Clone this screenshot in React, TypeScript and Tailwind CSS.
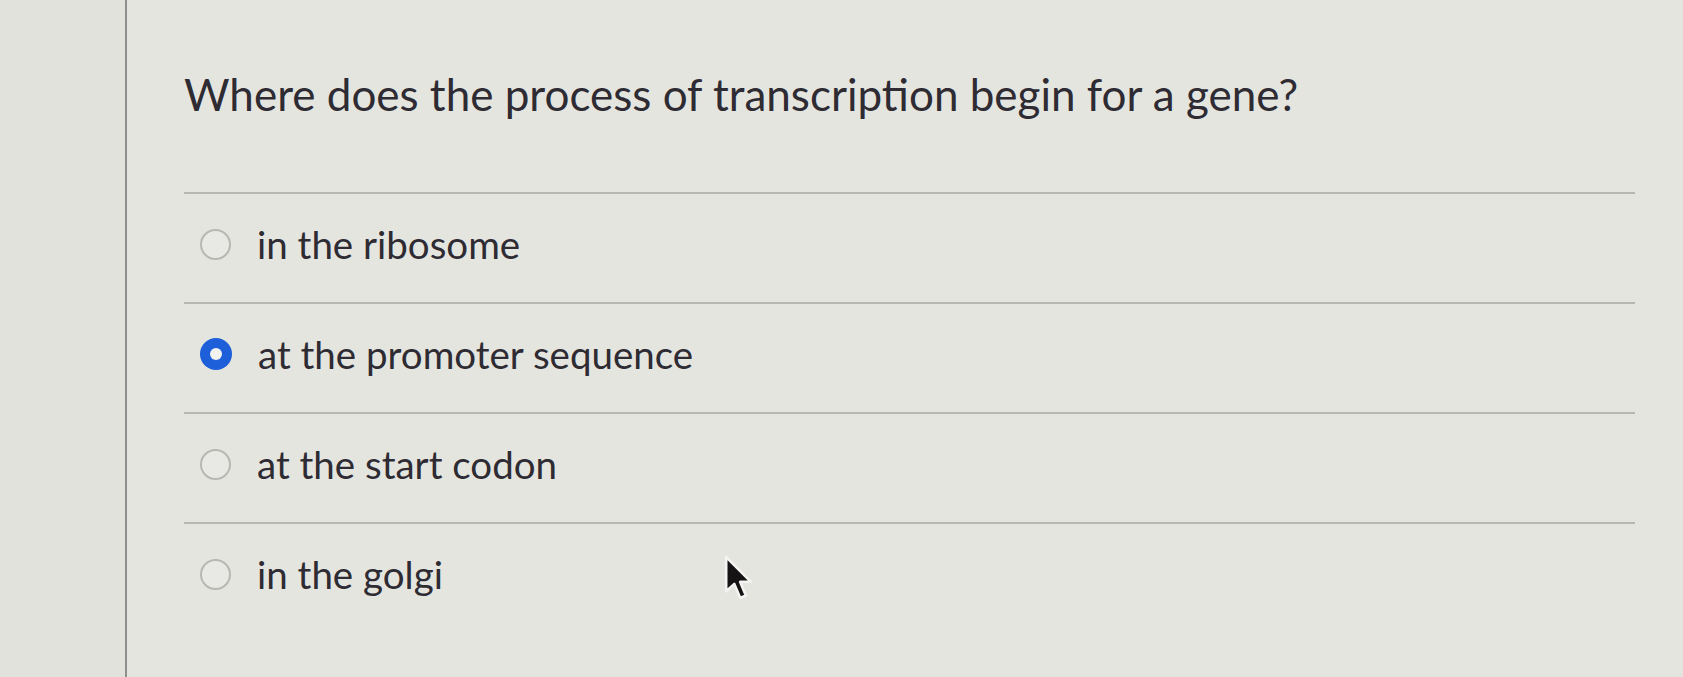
const options = [
  { label: 'in the ribosome', selected: false },
  { label: 'at the promoter sequence', selected: true },
  { label: 'at the start codon', selected: false },
  { label: 'in the golgi', selected: false },
];

function Radio({ selected }: { selected: boolean }) {
  if (selected) {
    return (
      <span className="flex h-[32px] w-[32px] shrink-0 items-center justify-center rounded-full bg-[#1c5fd8]">
        <span className="h-[12px] w-[12px] rounded-full bg-[#f2f2f0]" />
      </span>
    );
  }
  return <span className="h-[31px] w-[31px] shrink-0 rounded-full border-2 border-[#b7b7b3] bg-[#e8e8e4]" />;
}

function Cursor() {
  return (
    <svg className="absolute left-[724px] top-[555px]" width="30" height="49" viewBox="0 0 14 23">
      <path
        d="M1 1 L1 17 L4.8 13.6 L7.6 20.2 L10.2 19 L7.5 12.6 L12.6 12.6 Z"
        fill="#151313"
        stroke="#f4f4f2"
        strokeWidth="1.2"
        strokeLinejoin="round"
      />
    </svg>
  );
}

export default function App() {
  return (
    <div className="relative flex h-[677px] w-full overflow-hidden bg-[#e5e5e0] text-[#2e2b33]" style={{ fontFamily: 'Lato, "Open Sans", sans-serif' }}>
      <div className="w-[127px] shrink-0 border-r-2 border-[#8e8e8c] bg-[#e2e2dd]" />
      <div className="flex-1 pl-[57px] pr-[48px]">
        <h1 className="pt-[66px] pb-[70px] text-[44px] leading-[56px] font-normal">
          Where does the process of transcription begin for a gene?
        </h1>
        <ul>
          {options.map(o => (
            <li key={o.label} className="flex h-[110px] items-center gap-[26px] border-t-2 border-[#b8b8b3] pl-[16px] pb-[8px]">
              <Radio selected={o.selected} />
              <span className="text-[38.5px] leading-none">{o.label}</span>
            </li>
          ))}
        </ul>
      </div>
      <Cursor />
    </div>
  );
}
